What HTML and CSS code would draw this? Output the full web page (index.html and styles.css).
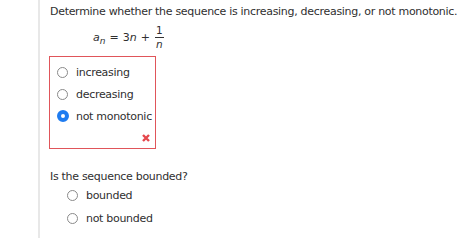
FILE: index.html
```html
<!DOCTYPE html>
<html>
<head>
<meta charset="utf-8">
<link rel="stylesheet" href="styles.css">
</head>
<body>
<div class="page">
  <div class="content">
    <p class="q">Determine whether the sequence is increasing, decreasing, or not monotonic.</p>
    <div class="formula">
      <span class="var">a<sub>n</sub></span>
      <span class="op">=</span>
      <span class="term">3<i>n</i></span>
      <span class="op">+</span>
      <span class="frac"><span class="num">1</span><span class="den"><i>n</i></span></span>
    </div>
    <div class="answer-box">
      <label class="opt"><span class="radio"></span>increasing</label>
      <label class="opt"><span class="radio"></span>decreasing</label>
      <label class="opt"><span class="radio checked"></span>not monotonic</label>
      <div class="mark">
        <svg width="8" height="8" viewBox="0 0 8 8"><path d="M1 1 L7 7 M7 1 L1 7" stroke="#e5474c" stroke-width="2.4" stroke-linecap="butt"/></svg>
      </div>
    </div>
    <p class="q2">Is the sequence bounded?</p>
    <div class="opts2">
      <label class="opt"><span class="radio"></span>bounded</label>
      <label class="opt"><span class="radio"></span>not bounded</label>
    </div>
  </div>
</div>
</body>
</html>
```
FILE: styles.css
```css
html, body { margin: 0; padding: 0; background: #fff; }
body { font-family: "DejaVu Sans", Verdana, sans-serif; font-size: 11px; letter-spacing: -0.3px; color: #2f2f2f; }
.page { padding-left: 38px; height: 238px; }
.content { border-left: 2px solid #e8e8e8; height: 238px; padding-left: 10px; box-sizing: border-box; padding-top: 4px; }
.q { margin: 0; line-height: 16px; white-space: nowrap; }
.formula { display: flex; align-items: center; margin-left: 43px; height: 32px; margin-top: 1px; margin-bottom: 3px; letter-spacing: 0; }
.formula .var { font-style: italic; }
.formula sub { font-size: 9px; vertical-align: -3px; line-height: 0; }
.formula .op { margin: 0 4px; }
.frac { display: inline-flex; flex-direction: column; align-items: center; font-size: 10.5px; line-height: 11px; margin-left: 1px; }
.frac .num { border-bottom: 1px solid #333; padding: 0 1px 1px; }
.frac .den { padding-top: 1px; }
.answer-box { width: 107px; margin-left: -1px; border: 1px solid #e0555a; padding: 4px 0 0 0; box-sizing: border-box; }
.opt { display: flex; align-items: center; height: 22px; }
.answer-box .opt { padding-left: 7px; }
.radio { width: 11px; height: 11px; border: 1px solid #8a8a8a; border-radius: 50%; margin-right: 8px; box-sizing: border-box; background: #fff; flex: none; }
.radio.checked { width: 12px; height: 12px; border: 4px solid #1f7cf0; background: #fff; margin-left: -0.5px; margin-right: 7.5px; }
.mark { display: flex; justify-content: flex-end; padding: 7px 5px 6px 0; }
.q2 { margin: 21px 0 0 0; line-height: 14px; }
.opts2 { padding-left: 17px; margin-top: 0; }
.opts2 .opt { height: 23px; }
```
